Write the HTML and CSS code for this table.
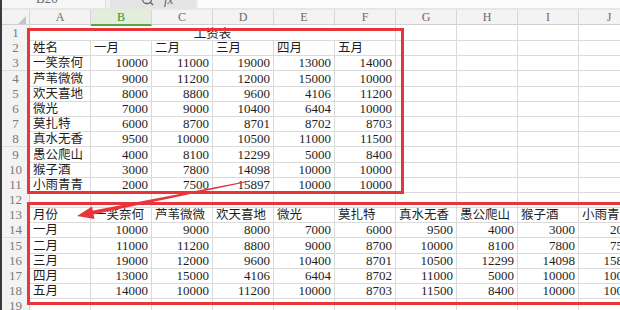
FILE: index.html
```html
<!DOCTYPE html>
<html lang="zh">
<head>
<meta charset="utf-8">
<link rel="stylesheet" href="styles.css">
</head>
<body>
<div class="frame">
  <div class="topbar">
    <div class="namebox"><span class="cut">B20</span></div>
    <div class="fxbox">
      <svg class="ico" width="12" height="8" viewBox="0 0 12 8"><circle cx="5" cy="-1" r="4.5" fill="none" stroke="#666" stroke-width="1.3"/><line x1="8" y1="2" x2="11" y2="5" stroke="#666" stroke-width="1.5"/></svg>
      <span class="cut fx">fx</span>
    </div>
    <div class="formula"></div>
  </div>
  <div class="sheet">
    <div class="row hrow">
      <div class="corner"><span class="tri"></span></div>
      <div class="ch">A</div><div class="ch sel">B</div><div class="ch">C</div><div class="ch">D</div><div class="ch">E</div><div class="ch">F</div><div class="ch">G</div><div class="ch">H</div><div class="ch">I</div><div class="ch">J</div>
    </div>
    <div class="row"><div class="rh">1</div><div class="c t title">工资表</div><div class="c"></div><div class="c"></div><div class="c"></div><div class="c"></div></div>
    <div class="row"><div class="rh">2</div><div class="c t">姓名</div><div class="c t">一月</div><div class="c t">二月</div><div class="c t">三月</div><div class="c t">四月</div><div class="c t">五月</div><div class="c"></div><div class="c"></div><div class="c"></div><div class="c"></div></div>
    <div class="row"><div class="rh">3</div><div class="c t">一笑奈何</div><div class="c n">10000</div><div class="c n">11000</div><div class="c n">19000</div><div class="c n">13000</div><div class="c n">14000</div><div class="c"></div><div class="c"></div><div class="c"></div><div class="c"></div></div>
    <div class="row"><div class="rh">4</div><div class="c t">芦苇微微</div><div class="c n">9000</div><div class="c n">11200</div><div class="c n">12000</div><div class="c n">15000</div><div class="c n">10000</div><div class="c"></div><div class="c"></div><div class="c"></div><div class="c"></div></div>
    <div class="row"><div class="rh">5</div><div class="c t">欢天喜地</div><div class="c n">8000</div><div class="c n">8800</div><div class="c n">9600</div><div class="c n">4106</div><div class="c n">11200</div><div class="c"></div><div class="c"></div><div class="c"></div><div class="c"></div></div>
    <div class="row"><div class="rh">6</div><div class="c t">微光</div><div class="c n">7000</div><div class="c n">9000</div><div class="c n">10400</div><div class="c n">6404</div><div class="c n">10000</div><div class="c"></div><div class="c"></div><div class="c"></div><div class="c"></div></div>
    <div class="row"><div class="rh">7</div><div class="c t">莫扎特</div><div class="c n">6000</div><div class="c n">8700</div><div class="c n">8701</div><div class="c n">8702</div><div class="c n">8703</div><div class="c"></div><div class="c"></div><div class="c"></div><div class="c"></div></div>
    <div class="row"><div class="rh">8</div><div class="c t">真水无香</div><div class="c n">9500</div><div class="c n">10000</div><div class="c n">10500</div><div class="c n">11000</div><div class="c n">11500</div><div class="c"></div><div class="c"></div><div class="c"></div><div class="c"></div></div>
    <div class="row"><div class="rh">9</div><div class="c t">愚公爬山</div><div class="c n">4000</div><div class="c n">8100</div><div class="c n">12299</div><div class="c n">5000</div><div class="c n">8400</div><div class="c"></div><div class="c"></div><div class="c"></div><div class="c"></div></div>
    <div class="row"><div class="rh">10</div><div class="c t">猴子酒</div><div class="c n">3000</div><div class="c n">7800</div><div class="c n">14098</div><div class="c n">10000</div><div class="c n">10000</div><div class="c"></div><div class="c"></div><div class="c"></div><div class="c"></div></div>
    <div class="row"><div class="rh">11</div><div class="c t">小雨青青</div><div class="c n">2000</div><div class="c n">7500</div><div class="c n">15897</div><div class="c n">10000</div><div class="c n">10000</div><div class="c"></div><div class="c"></div><div class="c"></div><div class="c"></div></div>
    <div class="row"><div class="rh">12</div><div class="c"></div><div class="c"></div><div class="c"></div><div class="c"></div><div class="c"></div><div class="c"></div><div class="c"></div><div class="c"></div><div class="c"></div><div class="c"></div></div>
    <div class="row"><div class="rh">13</div><div class="c t">月份</div><div class="c t">一笑奈何</div><div class="c t">芦苇微微</div><div class="c t">欢天喜地</div><div class="c t">微光</div><div class="c t">莫扎特</div><div class="c t">真水无香</div><div class="c t">愚公爬山</div><div class="c t">猴子酒</div><div class="c t">小雨青青</div></div>
    <div class="row"><div class="rh">14</div><div class="c t">一月</div><div class="c n">10000</div><div class="c n">9000</div><div class="c n">8000</div><div class="c n">7000</div><div class="c n">6000</div><div class="c n">9500</div><div class="c n">4000</div><div class="c n">3000</div><div class="c n">2000</div></div>
    <div class="row"><div class="rh">15</div><div class="c t">二月</div><div class="c n">11000</div><div class="c n">11200</div><div class="c n">8800</div><div class="c n">9000</div><div class="c n">8700</div><div class="c n">10000</div><div class="c n">8100</div><div class="c n">7800</div><div class="c n">7500</div></div>
    <div class="row"><div class="rh">16</div><div class="c t">三月</div><div class="c n">19000</div><div class="c n">12000</div><div class="c n">9600</div><div class="c n">10400</div><div class="c n">8701</div><div class="c n">10500</div><div class="c n">12299</div><div class="c n">14098</div><div class="c n">15897</div></div>
    <div class="row"><div class="rh">17</div><div class="c t">四月</div><div class="c n">13000</div><div class="c n">15000</div><div class="c n">4106</div><div class="c n">6404</div><div class="c n">8702</div><div class="c n">11000</div><div class="c n">5000</div><div class="c n">10000</div><div class="c n">10000</div></div>
    <div class="row"><div class="rh">18</div><div class="c t">五月</div><div class="c n">14000</div><div class="c n">10000</div><div class="c n">11200</div><div class="c n">10000</div><div class="c n">8703</div><div class="c n">11500</div><div class="c n">8400</div><div class="c n">10000</div><div class="c n">10000</div></div>
    <div class="row"><div class="rh">19</div><div class="c"></div><div class="c"></div><div class="c"></div><div class="c"></div><div class="c"></div><div class="c"></div><div class="c"></div><div class="c"></div><div class="c"></div><div class="c"></div></div>
  </div>
</div>
<div class="box box1"></div>
<div class="box box2"></div>
<svg class="arrow" width="620" height="310" viewBox="0 0 620 310">
  <polygon points="92,210.8 250,180.4 250,181.6 93,214.6" fill="#e8353a"/>
  <polygon points="77,216 92,206.5 94.5,219" fill="#e8353a"/>
</svg>
</body>
</html>
```
FILE: styles.css
```css
* { box-sizing: border-box; }
body {
  margin: 0;
  width: 620px;
  height: 310px;
  overflow: hidden;
  background: #fff;
  position: relative;
  font-family: "Liberation Serif", serif;
  color: #1e1e1e;
}
.frame {
  border-left: 2px solid #3b3b3b;
  height: 310px;
}
.topbar {
  display: flex;
  height: 10px;
  border-bottom: 2px solid #e6e6e6;
  background: #f0f0f0;
  overflow: hidden;
}
.namebox {
  width: 104px;
  background: #f6f6f6;
  border-right: 1px solid #dcdcdc;
  padding-left: 34px;
}
.cut {
  display: block;
  font-size: 13px;
  line-height: 13px;
  margin-top: -8px;
  color: #666;
}
.fxbox {
  width: 86px;
  margin-left: 4px;
  background: #e4e4e4;
  display: flex;
  align-items: flex-start;
  gap: 10px;
  padding-left: 32px;
}
.fx { font-style: italic; margin-top: -7px; }
.ico { display: block; }
.formula {
  flex: 1;
  background: #fbfbfb;
  margin-left: 2px;
}
.row {
  display: grid;
  grid-template-columns: 28px repeat(10, 61px);
  height: 15.2px;
}
.hrow {
  height: 15px;
  background: #f3f3f3;
  border-bottom: 1px solid #d0d0d0;
}
.corner {
  position: relative;
  border-right: 1px solid #d6d6d6;
}
.tri {
  position: absolute;
  right: 3px;
  bottom: 2px;
  width: 0;
  height: 0;
  border-left: 8px solid transparent;
  border-bottom: 8px solid #c4c4c4;
}
.ch {
  border-right: 1px solid #d6d6d6;
  text-align: center;
  font-size: 12px;
  line-height: 14px;
  color: #6a6a6a;
}
.ch.sel {
  background: #e2eedb;
  color: #3f8a2d;
  border-bottom: 2px solid #5aa544;
}
.rh {
  background: #f3f3f3;
  border-right: 1px solid #d0d0d0;
  border-bottom: 1px solid #dcdcdc;
  color: #7a7a7a;
  font-size: 13px;
  line-height: 15px;
  text-align: center;
}
.c {
  border-right: 1px solid #dadada;
  border-bottom: 1px solid #dadada;
  font-size: 13px;
  line-height: 15px;
  padding: 0 3px;
  white-space: nowrap;
  overflow: hidden;
}
.t {
  font-family: "Noto Sans CJK SC", sans-serif;
  font-size: 12.5px;
  line-height: 14.5px;
}
.n {
  text-align: right;
  font-family: "Liberation Serif", serif;
}
.title {
  grid-column: span 6;
  text-align: center;
  line-height: 16px;
}
.box {
  position: absolute;
  border: 3px solid #e8353a;
}
.box1 { left: 27px; top: 28px; width: 377px; height: 166px; }
.box2 { left: 27px; top: 202px; width: 620px; height: 103px; }
.arrow { position: absolute; left: 0; top: 0; }
```
